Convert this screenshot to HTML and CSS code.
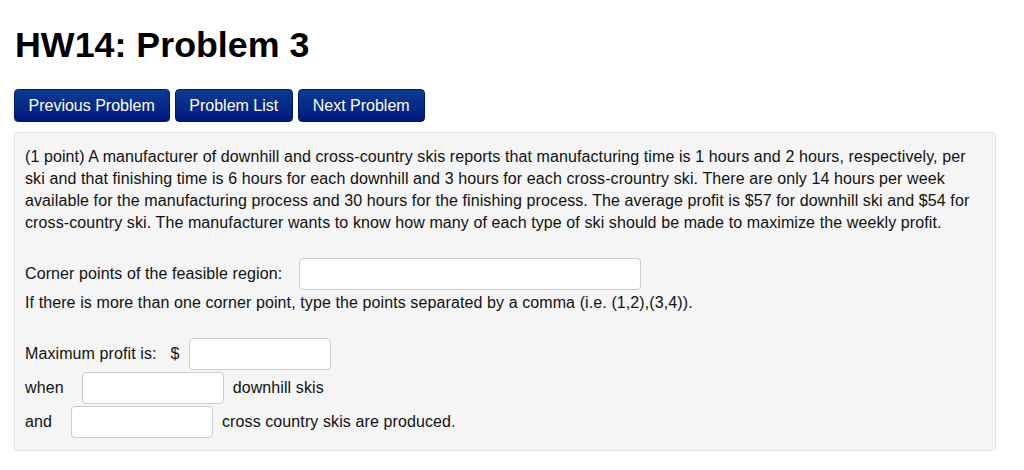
FILE: index.html
```html
<!DOCTYPE html>
<html>
<head>
<meta charset="utf-8">
<link rel="stylesheet" href="styles.css">
</head>
<body>
<h1 class="title">HW14: Problem 3</h1>
<div class="nav">
  <a class="btn">Previous Problem</a>
  <a class="btn">Problem List</a>
  <a class="btn">Next Problem</a>
</div>
<div class="well">
  <p class="text">(1 point) A manufacturer of downhill and cross-country skis reports that manufacturing time is 1 hours and 2 hours, respectively, per ski and that finishing time is 6 hours for each downhill and 3 hours for each cross-crountry ski. There are only 14 hours per week available for the manufacturing process and 30 hours for the finishing process. The average profit is $57 for downhill ski and $54 for cross-country ski. The manufacturer wants to know how many of each type of ski should be made to maximize the weekly profit.</p>
  <div class="row row-corner">
    <span class="lbl lbl-corner">Corner points of the feasible region:</span>
    <span class="input input-wide"></span>
  </div>
  <div class="row hint">If there is more than one corner point, type the points separated by a comma (i.e. (1,2),(3,4)).</div>
  <div class="row row-max">
    <span class="lbl lbl-max">Maximum profit is:</span>
    <span class="lbl lbl-dollar">$</span>
    <span class="input"></span>
  </div>
  <div class="row row-small">
    <span class="lbl lbl-when">when</span>
    <span class="input"></span>
    <span class="lbl lbl-after">downhill skis</span>
  </div>
  <div class="row row-small">
    <span class="lbl lbl-and">and</span>
    <span class="input"></span>
    <span class="lbl lbl-after">cross country skis are produced.</span>
  </div>
</div>
</body>
</html>
```
FILE: styles.css
```css
html, body {
  margin: 0;
  padding: 0;
  background: #fff;
}
body {
  font-family: "Liberation Sans", Arial, sans-serif;
  color: #111;
  padding: 0 28px 0 14px;
}
.title {
  margin: 0;
  padding-top: 24px;
  font-size: 35.8px;
  line-height: 42px;
  font-weight: bold;
  color: #000;
  padding-left: 1px;
}
.nav {
  display: flex;
  gap: 5px;
  margin-top: 23px;
}
.btn {
  display: block;
  height: 33px;
  box-sizing: border-box;
  padding: 0 14px 0 13.5px;
  line-height: 31px;
  font-size: 16px;
  color: #fff;
  background: linear-gradient(#0a3c92, #001a7f);
  border: 1px solid #001a66;
  border-radius: 4px;
}
.well {
  margin-top: 10px;
  background: #f5f5f5;
  border: 1px solid #e3e3e3;
  border-radius: 4px;
  padding: 13px 10px 12px 10px;
  font-size: 16px;
  letter-spacing: 0.1px;
  color: #111;
}
.text {
  margin: 0;
  line-height: 22px;
  hyphens: none;
}
.row {
  display: flex;
  align-items: center;
  line-height: 22px;
}
.row-corner {
  margin-top: 24px;
}
.hint {
  margin-top: 2px;
}
.row-max {
  margin-top: 24px;
}
.row-small {
  margin-top: 2px;
}
.input {
  display: block;
  width: 142px;
  height: 32px;
  box-sizing: border-box;
  background: #fff;
  border: 1px solid #ccc;
  border-radius: 4px;
}
.input-wide {
  width: 342px;
}
.lbl-corner { margin-right: 17px; }
.lbl-max { margin-right: 14px; }
.lbl-dollar { margin-right: 9px; }
.lbl-when { margin-right: 18px; }
.lbl-and { margin-right: 19px; }
.lbl-after { margin-left: 9px; }
```
